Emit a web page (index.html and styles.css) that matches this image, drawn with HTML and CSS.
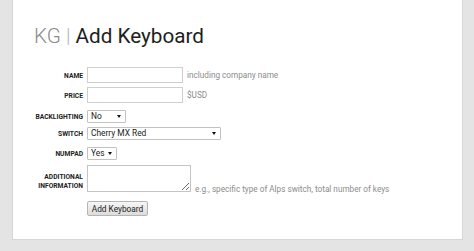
FILE: index.html
```html
<!DOCTYPE html>
<html>
<head>
<meta charset="utf-8">
<link rel="stylesheet" href="styles.css">
</head>
<body>
<div class="panel">
  <h1 class="title"><span class="brand">KG</span><span class="sep">|</span><span class="page">Add Keyboard</span></h1>
  <form class="form">
    <div class="row row-name">
      <label class="lbl">NAME</label>
      <div class="ctl"><input class="txt" type="text"><span class="hint">including company name</span></div>
    </div>
    <div class="row row-price">
      <label class="lbl">PRICE</label>
      <div class="ctl"><input class="txt" type="text"><span class="hint">$USD</span></div>
    </div>
    <div class="row row-bl">
      <label class="lbl">BACKLIGHTING</label>
      <div class="ctl"><span class="sel sel-bl"><select><option>No</option></select></span></div>
    </div>
    <div class="row row-sw">
      <label class="lbl">SWITCH</label>
      <div class="ctl"><span class="sel sel-sw"><select><option>Cherry MX Red</option></select></span></div>
    </div>
    <div class="row row-np">
      <label class="lbl">NUMPAD</label>
      <div class="ctl"><span class="sel sel-np"><select><option>Yes</option></select></span></div>
    </div>
    <div class="row row-info">
      <label class="lbl lbl-two">ADDITIONAL<br>INFORMATION</label>
      <div class="ctl ctl-end"><textarea class="area"></textarea><span class="hint hint-low">e.g., specific type of Alps switch, total number of keys</span></div>
    </div>
    <div class="row row-btn">
      <span class="lbl"></span>
      <div class="ctl"><button type="button" class="btn">Add Keyboard</button></div>
    </div>
  </form>
</div>
</body>
</html>
```
FILE: styles.css
```css
html, body {
  margin: 0;
  padding: 0;
}
body {
  background: #e4e4e4;
  font-family: Roboto, "Liberation Sans", Arial, sans-serif;
  width: 474px;
  height: 251px;
  overflow: hidden;
}
.panel {
  margin: 0 11px 0 12px;
  height: 240px;
  box-sizing: border-box;
  background: #fff;
  border: 1px solid #d6d6d6;
  border-top: none;
  padding: 24px 0 0 0;
}
.title {
  margin: 0 0 0 21px;
  font-weight: 400;
  font-size: 20.7px;
  line-height: 24px;
  color: #1e1e1e;
  display: flex;
  align-items: baseline;
}
.brand {
  color: #8a8a8a;
  font-weight: 300;
}
.sep {
  color: #b4b4b4;
  font-weight: 300;
  margin: 0 5px 0 5px;
}
.form {
  margin-top: 19px;
  display: flex;
  flex-direction: column;
}
.row {
  display: flex;
  align-items: center;
  gap: 4px;
}
.row-price { margin-top: 4px; }
.row-bl { margin-top: 7px; }
.row-sw { margin-top: 4px; }
.row-np { margin-top: 7px; }
.row-info { margin-top: 5px; align-items: flex-start; }
.row-btn { margin-top: 9px; }
.lbl {
  flex: 0 0 70px;
  font-size: 6.7px;
  font-weight: 700;
  color: #222;
  text-align: right;
  line-height: 9px;
  padding-top: 2px;
}
.lbl-two {
  padding-top: 8px;
}
.ctl {
  display: flex;
  align-items: center;
  gap: 4px;
}
.ctl-end {
  align-items: flex-end;
}
.txt {
  box-sizing: border-box;
  width: 96px;
  height: 16px;
  margin: 0;
  padding: 0 3px;
  border: 1px solid #cfcfcf;
  background: #fff;
  font-size: 8px;
}
.hint {
  font-size: 8.2px;
  color: #8c8c8c;
}
.hint-low {
  line-height: 10px;
  margin-bottom: -2px;
}
.sel {
  position: relative;
  display: flex;
}
.sel select {
  appearance: none;
  -webkit-appearance: none;
  box-sizing: border-box;
  height: 13px;
  margin: 0;
  padding: 0 0 0 3px;
  border: 1px solid #c2c2c2;
  border-radius: 1px;
  background: #fff;
  color: #1a1a1a;
  font-family: Roboto, "Liberation Sans", Arial, sans-serif;
  font-size: 8.4px;
  line-height: 11px;
}
.sel::after {
  content: "";
  position: absolute;
  right: 5px;
  top: 5px;
  border-left: 2.5px solid transparent;
  border-right: 2.5px solid transparent;
  border-top: 3.5px solid #111;
  pointer-events: none;
}
.sel-bl select { width: 39px; }
.sel-sw select { width: 134px; }
.sel-np select { width: 30px; }
.area {
  box-sizing: border-box;
  width: 104px;
  height: 27px;
  margin: 0;
  border: 1px solid #c4c4c4;
  padding: 2px;
  resize: both;
}
.btn {
  box-sizing: border-box;
  height: 15px;
  width: 61px;
  margin: 0;
  padding: 0;
  border: 1px solid #b4b4b4;
  border-radius: 2px;
  background: linear-gradient(#f6f6f6, #dcdcdc);
  font-family: Roboto, "Liberation Sans", Arial, sans-serif;
  font-size: 8.3px;
  color: #222;
}
```
